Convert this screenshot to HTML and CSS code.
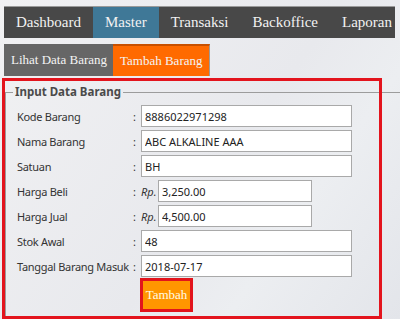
FILE: index.html
```html
<!DOCTYPE html>
<html>
<head>
<meta charset="utf-8">
<link rel="stylesheet" href="styles.css">
</head>
<body>
<nav class="nav">
  <a class="nav-item">Dashboard</a>
  <a class="nav-item active">Master</a>
  <a class="nav-item">Transaksi</a>
  <a class="nav-item">Backoffice</a>
  <a class="nav-item">Laporan</a>
</nav>
<div class="subtabs">
  <a class="subtab">Lihat Data Barang</a>
  <a class="subtab current">Tambah Barang</a>
</div>
<fieldset class="box">
  <legend class="box-title">Input Data Barang</legend>
  <div class="row"><span class="lbl">Kode Barang</span><span class="colon">:</span><input class="fld" value="8886022971298"></div>
  <div class="row"><span class="lbl">Nama Barang</span><span class="colon">:</span><input class="fld" value="ABC ALKALINE AAA"></div>
  <div class="row"><span class="lbl">Satuan</span><span class="colon">:</span><input class="fld" value="BH"></div>
  <div class="row"><span class="lbl">Harga Beli</span><span class="colon">:</span><span class="rp">Rp.</span><input class="fld short" value="3,250.00"></div>
  <div class="row"><span class="lbl">Harga Jual</span><span class="colon">:</span><span class="rp">Rp.</span><input class="fld short" value="4,500.00"></div>
  <div class="row"><span class="lbl">Stok Awal</span><span class="colon">:</span><input class="fld" value="48"></div>
  <div class="row last"><span class="lbl">Tanggal Barang Masuk</span><span class="colon">:</span><input class="fld" value="2018-07-17"></div>
  <div class="actions"><button class="btn">Tambah</button></div>
</fieldset>
<div class="highlight"></div>
</body>
</html>
```
FILE: styles.css
```css
html, body {
  margin: 0;
  padding: 0;
}
body {
  width: 400px;
  height: 319px;
  overflow: hidden;
  position: relative;
  background: linear-gradient(125deg, #f1f1f3 0%, #e8e9ed 55%, #eceef1 72%, #e3e5ea 100%);
  font-family: "Noto Sans", "Open Sans", sans-serif;
}
.nav {
  display: flex;
  margin: 6px 5px 0 4px;
  height: 31px;
  background: #484848;
  border-top: 1px solid #9a9a9a;
}
.nav-item {
  font-family: "Liberation Serif", "Times New Roman", serif;
  font-size: 15px;
  color: #f2f2f2;
  line-height: 31px;
  padding: 0 12px;
  white-space: nowrap;
}
.nav-item.active {
  background: #3f7897;
}
.subtabs {
  display: flex;
  margin: 6px 0 0 4px;
  height: 32px;
}
.subtab {
  font-family: "Liberation Serif", "Times New Roman", serif;
  font-size: 13px;
  color: #f4f4f4;
  line-height: 32px;
  padding: 0 6px 0 7px;
  background: #666666;
  white-space: nowrap;
}
.subtab.current {
  background: #ff6a00;
  border-top: 2px solid #c85000;
  border-right: 1px solid #9a9a9a;
  line-height: 30px;
}
.box {
  margin: 8px 0 0 5px;
  width: 395px;
  padding: 5px 7px 10px 7px;
  border: 1px solid #9c9c9c;
  border-right: none;
  box-sizing: border-box;
}
.box-title {
  font-size: 11.5px;
  font-weight: bold;
  color: #4a4a4a;
  padding: 0 2px;
  line-height: 16px;
}
.row {
  display: flex;
  align-items: center;
  height: 22px;
  margin-bottom: 3px;
  padding-left: 4px;
}
.row.last {
  margin-bottom: 1px;
}
.lbl {
  flex: none;
  width: 114px;
  font-size: 11px;
  letter-spacing: -0.3px;
  color: #333;
  white-space: nowrap;
}
.colon {
  flex: none;
  width: 8px;
  font-size: 11px;
  color: #333;
  padding-left: 2px;
}
.rp {
  flex: none;
  width: 17px;
  font-size: 11px;
  font-style: italic;
  color: #333;
}
.fld {
  box-sizing: border-box;
  width: 211px;
  height: 22px;
  margin: 0;
  padding: 0 3px;
  border: 1px solid #a9a9a9;
  background: #fff;
  font-family: "Noto Sans", "Open Sans", sans-serif;
  font-size: 11px;
  color: #222;
  outline: none;
}
.fld.short {
  width: 154px;
}
.actions {
  padding-left: 127px;
  line-height: 0;
}
.btn {
  box-sizing: border-box;
  width: 53px;
  height: 34px;
  margin: 0;
  padding: 0;
  border: 3px solid #e2141c;
  background: #ff9600;
  font-family: "Liberation Serif", "Times New Roman", serif;
  font-size: 13px;
  line-height: normal;
  color: #fffbe6;
}
.highlight {
  position: absolute;
  left: 2px;
  top: 78px;
  width: 380px;
  height: 241px;
  box-sizing: border-box;
  border: 3px solid #e3141d;
  pointer-events: none;
}
```
